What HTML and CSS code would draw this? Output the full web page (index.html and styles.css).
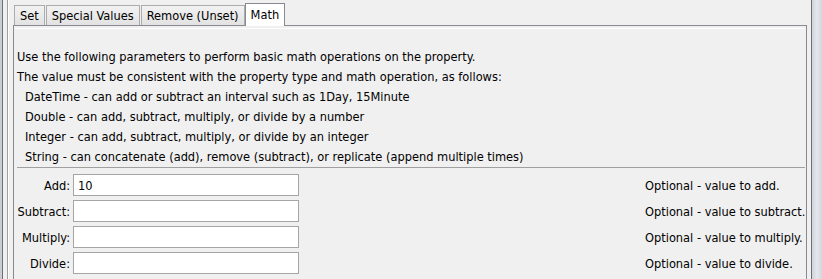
FILE: index.html
```html
<html>
<head>
<title>Set Property - Math</title>
<link rel="stylesheet" href="styles.css">
</head>
<body>

<div class="window">

    <div class="edge-left">
        <div class="edge-strip"></div>
        <div class="edge-line"></div>
    </div>

    <div class="main">
        <div class="tabs">
            <div class="tab">Set</div>
            <div class="tab">Special Values</div>
            <div class="tab">Remove (Unset)</div>
            <div class="tab selected">Math</div>
        </div>

        <div class="panel">
            <div class="panel-inner">
                <div class="help">
                    <p>Use the following parameters to perform basic math operations on the property.</p>
                    <p>The value must be consistent with the property type and math operation, as follows:</p>
                    <p class="indent">DateTime - can add or subtract an interval such as 1Day, 15Minute</p>
                    <p class="indent">Double - can add, subtract, multiply, or divide by a number</p>
                    <p class="indent">Integer - can add, subtract, multiply, or divide by an integer</p>
                    <p class="indent">String - can concatenate (add), remove (subtract), or replicate (append multiple times)</p>
                </div>

                <div class="separator"></div>

                <div class="form">
                    <label>Add:</label>
                    <input type="text" value="10">
                    <span></span>
                    <div class="note">Optional - value to add.</div>

                    <label>Subtract:</label>
                    <input type="text">
                    <span></span>
                    <div class="note">Optional - value to subtract.</div>

                    <label>Multiply:</label>
                    <input type="text">
                    <span></span>
                    <div class="note">Optional - value to multiply.</div>

                    <label>Divide:</label>
                    <input type="text">
                    <span></span>
                    <div class="note">Optional - value to divide.</div>
                </div>
            </div>
        </div>
    </div>

    <div class="edge-right">
        <div class="scroll"></div>
    </div>

</div>

</body>
</html>
```

FILE: styles.css
```css
body { margin: 0; background: #f0f0f0; font-family: "DejaVu Sans Condensed", "Liberation Sans", sans-serif; font-size: 12.7px; color: #000; overflow: hidden; }
.window { display: flex; width: 822px; height: 279px; background: #f0f0f0; overflow: hidden; }

.edge-left { width: 13px; display: flex; }
.edge-strip { width: 2px; background: #c9ced6; border-right: 1px solid #6f6f6f; }
.edge-line { width: 1px; margin-left: 4px; background: #a0a0a0; border-right: 1px solid #ffffff; }

.main { width: 794px; display: flex; flex-direction: column; }

.tabs { display: flex; align-items: flex-end; height: 25px; padding-left: 1px; gap: 1px; }
.tab { height: 20px; line-height: 20px; padding: 0 5px; border: 1px solid #acacac; border-bottom: none; background: linear-gradient(#f2f2f2, #e2e2e2); box-sizing: border-box; }
.tab.selected { height: 23px; line-height: 22px; padding: 0 5px; margin-left: -1px; margin-bottom: -1px; background: #ffffff; border-color: #898992; position: relative; z-index: 1; }

.panel { flex: 1; border: 1px solid #898992; border-bottom: none; padding: 2px 1px 0 1px; }
.panel-inner { height: 100%; border-top: 1px solid #ffffff; padding: 18px 0 0 2px; }

.help p { margin: 0; height: 20px; line-height: 20px; white-space: nowrap; }
.help .indent { padding-left: 8px; }

.separator { height: 0; border-top: 1px solid #a0a0a0; margin: 0 0 6px 0; }

.form { display: grid; grid-template-columns: 53px 226px 1fr auto; column-gap: 3px; row-gap: 4px; align-items: center; }
.form label { text-align: right; white-space: nowrap; }
.form input { height: 22px; box-sizing: border-box; border: 1px solid #a5a5a5; background: #fff; font: inherit; padding: 0 4px; outline: none; }
.note { white-space: nowrap; width: 160px; }

.edge-right { width: 15px; display: flex; justify-content: flex-end; }
.scroll { width: 10px; border-left: 1px solid #6f6f6f; background: linear-gradient(90deg, #cfd4db, #e4e8ec 50%, #d2d7de); }
```
